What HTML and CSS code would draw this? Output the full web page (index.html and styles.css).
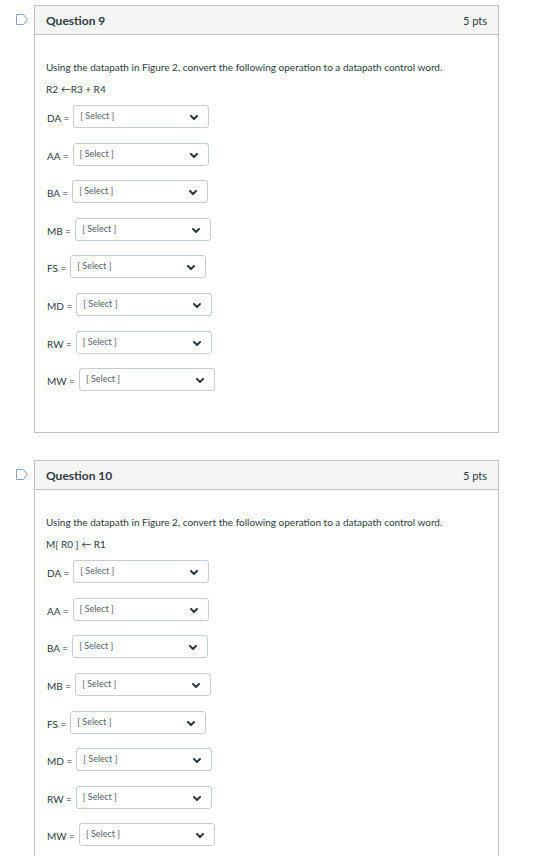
FILE: index.html
```html
<!DOCTYPE html>
<html lang="en">
<head>
<meta charset="utf-8">
<title>Quiz</title>
<link rel="stylesheet" href="styles.css">
</head>
<body>
<div class="page">
  <section class="question">
    <div class="gutter">
      <svg class="flag" viewBox="0 0 12 11" aria-hidden="true"><path d="M0.5 0.5 H7.5 L11.3 5.5 L7.5 10.5 H0.5 Z"/></svg>
    </div>
    <div class="card">
      <header class="card-head"><h2 class="q-title">Question 9</h2><span class="pts">5 pts</span></header>
      <div class="card-body">
        <p class="prompt">Using the datapath in Figure 2, convert the following operation to a datapath control word.</p>
        <p class="op">R2 ←R3 + R4</p>
        <div class="fields">
          <div class="field"><span class="label">DA =</span><div class="select"><span class="sel-text">[ Select ]</span><svg class="chev" viewBox="0 0 8 5"><path d="M1 1 L4 4 L7 1"/></svg></div></div>
          <div class="field"><span class="label">AA =</span><div class="select"><span class="sel-text">[ Select ]</span><svg class="chev" viewBox="0 0 8 5"><path d="M1 1 L4 4 L7 1"/></svg></div></div>
          <div class="field"><span class="label">BA =</span><div class="select"><span class="sel-text">[ Select ]</span><svg class="chev" viewBox="0 0 8 5"><path d="M1 1 L4 4 L7 1"/></svg></div></div>
          <div class="field"><span class="label">MB =</span><div class="select"><span class="sel-text">[ Select ]</span><svg class="chev" viewBox="0 0 8 5"><path d="M1 1 L4 4 L7 1"/></svg></div></div>
          <div class="field"><span class="label">FS =</span><div class="select"><span class="sel-text">[ Select ]</span><svg class="chev" viewBox="0 0 8 5"><path d="M1 1 L4 4 L7 1"/></svg></div></div>
          <div class="field"><span class="label">MD =</span><div class="select"><span class="sel-text">[ Select ]</span><svg class="chev" viewBox="0 0 8 5"><path d="M1 1 L4 4 L7 1"/></svg></div></div>
          <div class="field"><span class="label">RW =</span><div class="select"><span class="sel-text">[ Select ]</span><svg class="chev" viewBox="0 0 8 5"><path d="M1 1 L4 4 L7 1"/></svg></div></div>
          <div class="field"><span class="label">MW =</span><div class="select"><span class="sel-text">[ Select ]</span><svg class="chev" viewBox="0 0 8 5"><path d="M1 1 L4 4 L7 1"/></svg></div></div>
        </div>
      </div>
    </div>
  </section>

  <section class="question">
    <div class="gutter">
      <svg class="flag" viewBox="0 0 12 11" aria-hidden="true"><path d="M0.5 0.5 H7.5 L11.3 5.5 L7.5 10.5 H0.5 Z"/></svg>
    </div>
    <div class="card">
      <header class="card-head"><h2 class="q-title">Question 10</h2><span class="pts">5 pts</span></header>
      <div class="card-body">
        <p class="prompt">Using the datapath in Figure 2, convert the following operation to a datapath control word.</p>
        <p class="op">M[ R0 ] ← R1</p>
        <div class="fields">
          <div class="field"><span class="label">DA =</span><div class="select"><span class="sel-text">[ Select ]</span><svg class="chev" viewBox="0 0 8 5"><path d="M1 1 L4 4 L7 1"/></svg></div></div>
          <div class="field"><span class="label">AA =</span><div class="select"><span class="sel-text">[ Select ]</span><svg class="chev" viewBox="0 0 8 5"><path d="M1 1 L4 4 L7 1"/></svg></div></div>
          <div class="field"><span class="label">BA =</span><div class="select"><span class="sel-text">[ Select ]</span><svg class="chev" viewBox="0 0 8 5"><path d="M1 1 L4 4 L7 1"/></svg></div></div>
          <div class="field"><span class="label">MB =</span><div class="select"><span class="sel-text">[ Select ]</span><svg class="chev" viewBox="0 0 8 5"><path d="M1 1 L4 4 L7 1"/></svg></div></div>
          <div class="field"><span class="label">FS =</span><div class="select"><span class="sel-text">[ Select ]</span><svg class="chev" viewBox="0 0 8 5"><path d="M1 1 L4 4 L7 1"/></svg></div></div>
          <div class="field"><span class="label">MD =</span><div class="select"><span class="sel-text">[ Select ]</span><svg class="chev" viewBox="0 0 8 5"><path d="M1 1 L4 4 L7 1"/></svg></div></div>
          <div class="field"><span class="label">RW =</span><div class="select"><span class="sel-text">[ Select ]</span><svg class="chev" viewBox="0 0 8 5"><path d="M1 1 L4 4 L7 1"/></svg></div></div>
          <div class="field"><span class="label">MW =</span><div class="select"><span class="sel-text">[ Select ]</span><svg class="chev" viewBox="0 0 8 5"><path d="M1 1 L4 4 L7 1"/></svg></div></div>
        </div>
      </div>
    </div>
  </section>
</div>
</body>
</html>
```

FILE: styles.css
```css
html, body {
  margin: 0;
  padding: 0;
  background: #ffffff;
}

body {
  font-family: Lato, "Noto Sans", "DejaVu Sans", sans-serif;
  color: #2d3b45;
}

.page {
  padding-top: 5px;
}

.question {
  display: flex;
  margin-bottom: 27px;
}

.gutter {
  width: 34px;
  flex: none;
}

.flag {
  display: block;
  width: 12px;
  height: 11px;
  margin: 9px 0 0 16px;
}

.flag path {
  fill: none;
  stroke: #8aa5bf;
  stroke-width: 1;
}

.card {
  width: 465px;
  box-sizing: border-box;
  border: 1px solid #c2c2c2;
  background: #ffffff;
}

.card-head {
  height: 29px;
  box-sizing: border-box;
  background: #f5f5f5;
  border-bottom: 1px solid #c2c2c2;
  display: flex;
  align-items: center;
  justify-content: space-between;
  padding: 0 11px;
}

.q-title {
  margin: 0;
  font-size: 12px;
  font-weight: 700;
}

.pts {
  font-size: 11px;
}

.card-body {
  padding: 25px 11px 41px;
}

.prompt,
.op {
  margin: 0;
  font-size: 10px;
  line-height: 14px;
}

.op {
  margin-top: 8px;
}

.fields {
  display: flex;
  flex-direction: column;
  gap: 14.6px;
  margin-top: 9px;
}

.field {
  display: flex;
  align-items: flex-start;
  gap: 4px;
}

.label {
  font-size: 10px;
  line-height: 12px;
  margin-top: 7px;
  padding-left: 1px;
}

.select {
  width: 136px;
  height: 23px;
  box-sizing: border-box;
  border: 1px solid #c7cdd1;
  border-radius: 3px;
  display: flex;
  justify-content: space-between;
  align-items: flex-start;
  padding: 5px 10px 0 6px;
  background: #ffffff;
}

.sel-text {
  font-size: 9px;
  line-height: 10px;
  color: #55626c;
}

.chev {
  width: 8px;
  height: 5px;
  margin-top: 4px;
}

.chev path {
  fill: none;
  stroke: #2d3b45;
  stroke-width: 2;
  stroke-linecap: round;
  stroke-linejoin: round;
}
```
